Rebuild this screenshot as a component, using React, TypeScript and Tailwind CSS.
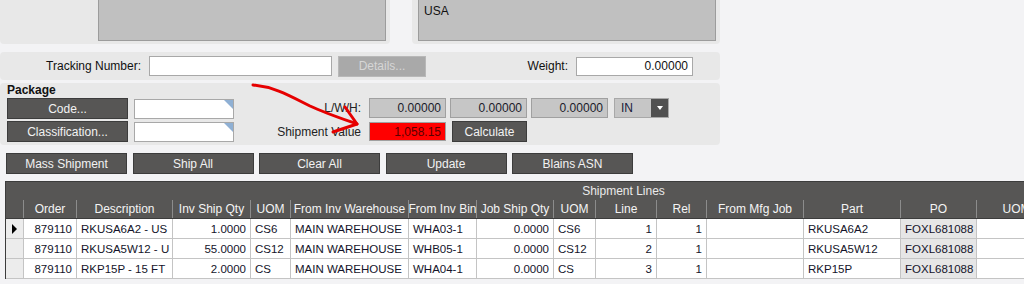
import type { ReactNode } from 'react'

const FONT = { fontFamily: '"Liberation Sans", Arial, sans-serif' }

const COLS: { label: string; w: number; align: 'left' | 'right'; cls?: string }[] = [
  { label: 'Order', w: 53, align: 'right' },
  { label: 'Description', w: 96, align: 'left' },
  { label: 'Inv Ship Qty', w: 78, align: 'right' },
  { label: 'UOM', w: 40, align: 'left' },
  { label: 'From Inv Warehouse', w: 118, align: 'left' },
  { label: 'From Inv Bin', w: 68, align: 'left' },
  { label: 'Job Ship Qty', w: 77, align: 'right' },
  { label: 'UOM', w: 42, align: 'left' },
  { label: 'Line', w: 61, align: 'right' },
  { label: 'Rel', w: 50, align: 'right' },
  { label: 'From Mfg Job', w: 97, align: 'left' },
  { label: 'Part', w: 97, align: 'left' },
  { label: 'PO', w: 76, align: 'left', cls: 'bg-[#e6e6e6]' },
  { label: 'UOM', w: 80, align: 'left' },
  { label: '', w: 200, align: 'left' }
]

const ROWS = [
  ['879110', 'RKUSA6A2 - US', '1.0000', 'CS6', 'MAIN WAREHOUSE', 'WHA03-1', '0.0000', 'CS6', '1', '1', '', 'RKUSA6A2', 'FOXL681088', '', ''],
  ['879110', 'RKUSA5W12 - U', '55.0000', 'CS12', 'MAIN WAREHOUSE', 'WHB05-1', '0.0000', 'CS12', '2', '1', '', 'RKUSA5W12', 'FOXL681088', '', ''],
  ['879110', 'RKP15P - 15 FT', '2.0000', 'CS', 'MAIN WAREHOUSE', 'WHA04-1', '0.0000', 'CS', '3', '1', '', 'RKP15P', 'FOXL681088', '', '']
]

function DarkButton({ children, w }: { children: ReactNode; w: number }) {
  return (
    <div
      className="flex h-[21px] shrink-0 items-center justify-center border border-[#3c3c3c] bg-[#575655] text-[12px] text-[#f2f2f2]"
      style={{ width: w }}
    >
      {children}
    </div>
  )
}

function FlagInput() {
  return (
    <div className="relative h-[20px] w-[100px] border border-[#a8a8a8] bg-white">
      <div className="absolute right-0 top-0 h-0 w-0 border-l-[9px] border-t-[9px] border-l-transparent border-t-[#8fb0d4]" />
    </div>
  )
}

function GrayNum({ value }: { value: string }) {
  return (
    <div className="flex h-[20px] w-[77px] items-center justify-end border border-[#a0a0a0] bg-[#c6c6c6] pr-[4px] text-[12px] text-[#1a1a2a]">
      {value}
    </div>
  )
}

export default function App() {
  return (
    <div className="relative h-[284px] w-[1024px] overflow-hidden bg-[#f3f3f5]" style={FONT}>
      {/* address panels */}
      <div className="flex h-[44px]">
        <div className="flex w-[390px] rounded-b-[4px] bg-[#e8e8e8] pb-[3px] pl-[98px] pr-[4px]">
          <div className="flex-1 border border-t-0 border-[#9c9c9c] bg-[#c0c0c0]" />
        </div>
        <div className="ml-[22px] flex w-[308px] rounded-b-[4px] bg-[#e8e8e8] pb-[3px] pl-[6px] pr-[4px]">
          <div className="flex-1 border border-t-0 border-[#9c9c9c] bg-[#c0c0c0] pl-[5px] pt-[2px] text-[12px] text-[#111]">
            USA
          </div>
        </div>
      </div>

      {/* tracking row */}
      <div className="mt-[8px] flex h-[28px] w-[720px] items-center rounded-[4px] bg-[#e8e8e8] text-[12px] text-[#111]">
        <div className="w-[141px] text-right">Tracking Number:</div>
        <div className="ml-[8px] h-[20px] w-[183px] border border-[#a8a8a8] bg-white" />
        <div className="ml-[6px] flex h-[21px] w-[88px] items-center justify-center border border-[#b8b8b8] bg-[#a9a9a9] text-[#d6d6d6]">
          Details...
        </div>
        <div className="ml-auto">Weight:</div>
        <div className="ml-[8px] mr-[27px] flex h-[19px] w-[117px] items-center justify-end border border-[#a8a8a8] bg-white pr-[4px]">
          0.00000
        </div>
      </div>

      {/* package panel */}
      <div className="mt-[3px] h-[62px] w-[720px] rounded-[4px] bg-[#e8e8e8] pl-[7px] pt-[1px] text-[12px] text-[#111]">
        <div className="font-bold leading-[13px]">Package</div>
        <div className="mt-[1px] flex">
          <div className="flex flex-col gap-[2px]">
            <div className="flex items-center gap-[6px]">
              <DarkButton w={121}>Code...</DarkButton>
              <FlagInput />
            </div>
            <div className="flex items-center gap-[6px]">
              <DarkButton w={121}>Classification...</DarkButton>
              <FlagInput />
            </div>
          </div>
          <div className="ml-[41px] flex flex-col gap-[3px]">
            <div className="flex items-center">
              <div className="w-[86px] text-right text-[#222]">L/W/H:</div>
              <div className="ml-[8px] flex gap-[4px]">
                <GrayNum value="0.00000" />
                <GrayNum value="0.00000" />
                <GrayNum value="0.00000" />
              </div>
              <div className="ml-[6px] flex h-[20px] w-[55px] border border-[#a8a8a8] bg-[#c6c6c6]">
                <div className="flex flex-1 items-center pl-[6px] text-[#1a1a3a]">IN</div>
                <div className="flex w-[17px] items-center justify-center bg-[#505050]">
                  <div className="h-0 w-0 border-x-[3px] border-t-[4px] border-x-transparent border-t-white" />
                </div>
              </div>
            </div>
            <div className="flex items-center">
              <div className="w-[86px] whitespace-nowrap text-right text-[#222]">Shipment Value</div>
              <div className="ml-[8px] flex h-[19px] w-[77px] items-center justify-end border border-[#a0a0a0] bg-[#ff0000] pr-[4px] text-[#5a0000]">
                1,058.15
              </div>
              <div className="ml-[6px]">
                <DarkButton w={75}>Calculate</DarkButton>
              </div>
            </div>
          </div>
        </div>
      </div>

      {/* action buttons */}
      <div className="ml-[6px] mt-[8px] flex gap-[5.5px]">
        <DarkButton w={121}>Mass Shipment</DarkButton>
        <DarkButton w={121}>Ship All</DarkButton>
        <DarkButton w={121}>Clear All</DarkButton>
        <DarkButton w={121}>Update</DarkButton>
        <DarkButton w={121}>Blains ASN</DarkButton>
      </div>

      {/* shipment lines grid */}
      <div className="ml-[5px] mt-[7px] w-[1236px] border-l border-t border-[#3c3c3c] bg-white text-[11px]">
        <div className="flex h-[18px] items-center justify-center bg-[#575655] text-[12px] text-[#eaeaea]">
          Shipment Lines
        </div>
        <div className="flex h-[19px] border-b border-[#3c3c3c] bg-[#575655] text-[12px] text-[#f4f4f4]">
          <div className="w-[18px] shrink-0 border-r border-[#8c8c8c]" />
          {COLS.map((c, i) => (
            <div
              key={i}
              className="flex shrink-0 items-center justify-center overflow-hidden whitespace-nowrap border-r border-[#8c8c8c]"
              style={{ width: c.w }}
            >
              {c.label}
            </div>
          ))}
        </div>
        {ROWS.map((r, ri) => (
          <div key={ri} className="flex h-[20px] border-b border-[#c4c4c4] text-[12px] text-[#14142a]">
            <div className="flex w-[18px] shrink-0 items-center justify-center border-r border-[#c4c4c4] bg-[#ececec]">
              {ri === 0 && (
                <div className="h-0 w-0 border-y-[5px] border-l-[5px] border-y-transparent border-l-black" />
              )}
            </div>
            {COLS.map((c, i) => (
              <div
                key={i}
                className={[
                  'flex shrink-0 items-start overflow-hidden whitespace-nowrap border-r border-[#c4c4c4] px-[4px] pt-[2px] text-[11.5px]',
                  c.align === 'right' ? 'justify-end' : 'justify-start',
                  c.cls ?? ''
                ].join(' ')}
                style={{ width: c.w }}
              >
                {r[i]}
              </div>
            ))}
          </div>
        ))}
      </div>

      {/* hand-drawn arrow */}
      <svg className="pointer-events-none absolute left-0 top-0" width="1024" height="284">
        <path
          d="M253 85 C 275 87, 290 96, 310 106 C 325 113, 340 118, 357 124"
          fill="none"
          stroke="#e60000"
          strokeWidth="3"
          strokeLinecap="round"
        />
        <path d="M345 107 L 357 124 L 333 132" fill="none" stroke="#e60000" strokeWidth="3" strokeLinecap="round" strokeLinejoin="round" />
      </svg>
    </div>
  )
}
